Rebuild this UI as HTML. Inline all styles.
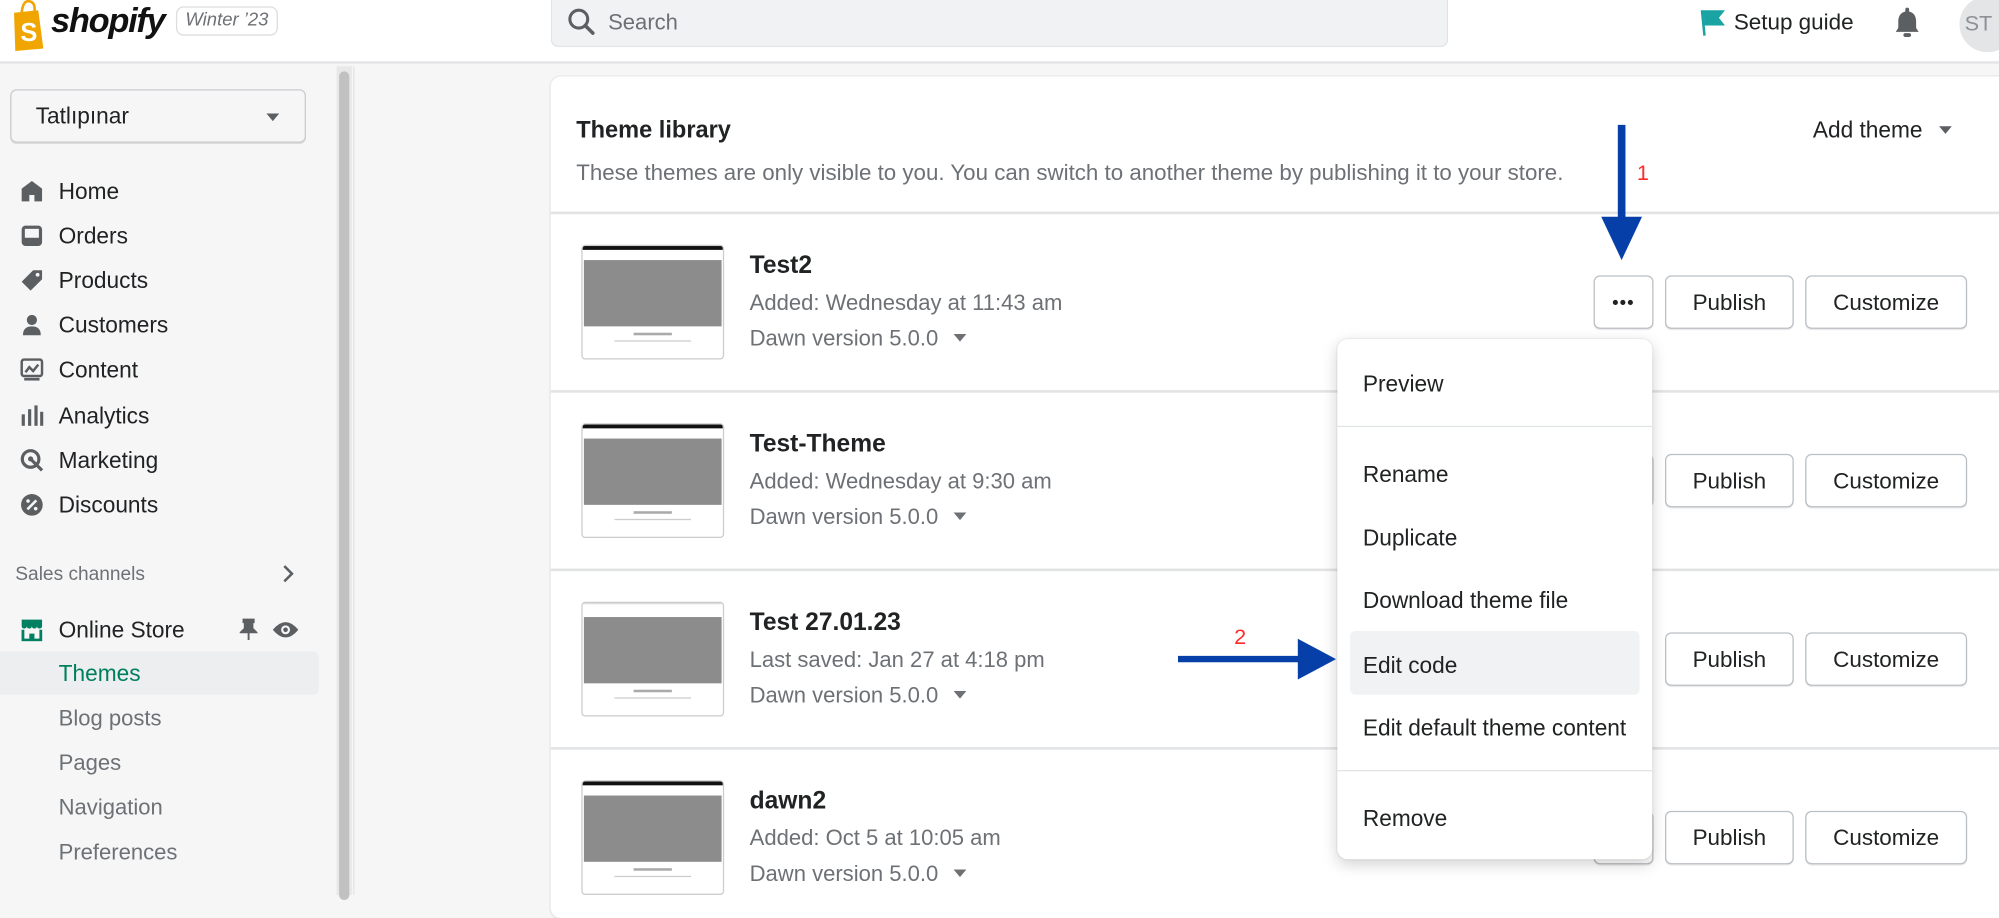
<!DOCTYPE html>
<html><head><meta charset="utf-8"><style>
*{box-sizing:border-box;margin:0;padding:0}
html,body{width:1999px;height:892px;overflow:hidden;background:#f6f6f7}
#w{position:absolute;left:0;top:0;width:1568px;height:700px;transform:scale(1.27487);transform-origin:0 0;font-family:"Liberation Sans",sans-serif;color:#202223;background:#f6f6f7}
.a{position:absolute;white-space:nowrap}
.nav{position:absolute;left:46px;font-size:17.8px;font-weight:500;color:#202223}
.sub{position:absolute;left:46px;font-size:17.3px;color:#6d7175}
.ic{position:absolute;left:16px;width:18px;height:18px}
.btn{position:absolute;height:42px;border:1px solid #babfc3;border-radius:5px;background:#fff;font-size:17.6px;display:flex;align-items:center;justify-content:center;box-shadow:0 1px 0 rgba(0,0,0,.08)}
.t{position:absolute;left:588px;font-size:19.3px;font-weight:bold}
.s{position:absolute;left:588px;font-size:17.3px;color:#6d7175}
.hr{position:absolute;left:432px;width:1136px;height:1px;background:#e1e3e5}
.mi{position:absolute;left:1069px;font-size:17.8px;color:#202223}
.thumb{position:absolute;left:456px;width:112px;height:90px;border:1px solid #ccc;border-radius:3px;background:#fff;overflow:hidden}
.thumb .b{position:absolute;left:0;top:0;width:100%;height:3px;background:#111}
.thumb .g{position:absolute;left:1px;top:11px;width:108px;height:52px;background:#8c8c8c}
.thumb .l{position:absolute;left:40px;top:68px;width:30px;height:2px;background:#aaa}
.thumb .l2{position:absolute;left:25px;top:74px;width:60px;height:1px;background:#ccc}
</style></head><body><div id="w">
<div class="a" style="left:0;top:0;width:1568px;height:50px;background:#fff;border-bottom:2px solid #e4e5e7"></div>
<svg class="a" style="left:8px;top:0" width="28" height="40" viewBox="0 0 28 40"><path d="M3 10 L22 8 L26 38 L4 40 Z" fill="#f0a500"/><path d="M9 10 Q10 0 15 1 Q20 2 19 9" fill="none" stroke="#f0a500" stroke-width="2"/><text x="8" y="32" font-family="Liberation Sans" font-weight="bold" font-size="20" fill="#fff">S</text></svg>
<div class="a" style="left:40px;top:1px;font-size:27px;font-weight:bold;font-style:italic;letter-spacing:-1px;color:#111">shopify</div>
<div class="a" style="left:138px;top:5px;width:80px;height:23px;border:1px solid #ddd;border-radius:6px;font-size:14.5px;font-style:italic;color:#6d7175;text-align:center;line-height:21px">Winter ’23</div>
<div class="a" style="left:432px;top:0;width:704px;height:37px;background:#f1f2f3;border:1px solid #e1e3e5;border-top:none;border-radius:0 0 6px 6px"></div>
<svg class="a" style="left:444px;top:5px" width="24" height="24" viewBox="0 0 24 24"><circle cx="10" cy="10" r="7" fill="none" stroke="#5c5f62" stroke-width="2.4"/><path d="M15 15l6 6" stroke="#5c5f62" stroke-width="2.8" stroke-linecap="round"/></svg>
<div class="a" style="left:477px;top:7px;font-size:17.3px;color:#6d7175">Search</div>
<svg class="a" style="left:1333px;top:6px" width="20" height="22" viewBox="0 0 20 22"><path d="M2 2 L4 22 M3 3 H18 L14 8 L18 13 H4" fill="#1aa3a3" stroke="#1aa3a3" stroke-width="2"/></svg>
<div class="a" style="left:1360px;top:7px;font-size:17.6px;color:#202223">Setup guide</div>
<svg class="a" style="left:1485px;top:4px" width="22" height="26" viewBox="0 0 22 26"><path d="M11 2a1.5 1.5 0 0 1 1.5 1.5V5c4 1 5.5 4 5.5 8v5l2 3H2l2-3v-5c0-4 1.5-7 5.5-8V3.5A1.5 1.5 0 0 1 11 2z" fill="#5c5f62"/><rect x="8" y="22" width="6" height="3" rx="1.5" fill="#5c5f62"/></svg>
<div class="a" style="left:1537px;top:-3px;width:44px;height:44px;border-radius:50%;background:#e4e5e7;font-size:17px;color:#8c9196;line-height:44px;padding-left:4px">ST</div>
<div class="a" style="left:264px;top:52px;width:12px;height:650px;background:#e8e8e8"></div>
<div class="a" style="left:266px;top:56px;width:8px;height:650px;border-radius:4px;background:#c1c1c1"></div>
<div class="a" style="left:277px;top:52px;width:1px;height:650px;background:#e1e3e5"></div>
<div class="a" style="left:8px;top:70px;width:232px;height:42px;border:1px solid #c9cccf;border-radius:5px;background:#f6f6f7;box-shadow:0 1px 0 rgba(0,0,0,.1)"></div>
<div class="a" style="left:28px;top:81px;font-size:17.8px;font-weight:500">Tatlıpınar</div>
<div class="a" style="left:209px;top:89px;border-left:5px solid transparent;border-right:5px solid transparent;border-top:6px solid #5c5f62"></div>

<svg class="ic" style="top:141px" viewBox="0 0 18 18"><path d="M9 1 L17 7 V17 H11 V12 H7 V17 H1 V7 Z" fill="#5c5f62"/></svg>
<div class="nav" style="top:140px">Home</div>
<svg class="ic" style="top:176px" viewBox="0 0 18 18"><rect x="1" y="1" width="16" height="16" rx="3" fill="#5c5f62"/><rect x="3.5" y="3.5" width="11" height="7" fill="#f6f6f7"/></svg>
<div class="nav" style="top:175px">Orders</div>
<svg class="ic" style="top:211px" viewBox="0 0 18 18"><path d="M10 1 H17 V8 L8 17 L1 10 Z" fill="#5c5f62"/><circle cx="13.5" cy="4.5" r="1.5" fill="#f6f6f7"/></svg>
<div class="nav" style="top:210px">Products</div>
<svg class="ic" style="top:246px" viewBox="0 0 18 18"><circle cx="9" cy="5" r="4" fill="#5c5f62"/><path d="M2 17 Q2 10 9 10 Q16 10 16 17Z" fill="#5c5f62"/></svg>
<div class="nav" style="top:245px">Customers</div>
<svg class="ic" style="top:281px" viewBox="0 0 18 18"><rect x="1" y="1" width="16" height="13" rx="2" fill="none" stroke="#5c5f62" stroke-width="2"/><path d="M4 11 L7 7 L10 10 L14 5" stroke="#5c5f62" stroke-width="2" fill="none"/><rect x="3" y="15.5" width="12" height="2" fill="#5c5f62"/></svg>
<div class="nav" style="top:280px">Content</div>
<svg class="ic" style="top:317px" viewBox="0 0 18 18"><rect x="1" y="8" width="2.5" height="9" fill="#5c5f62"/><rect x="6" y="4" width="2.5" height="13" fill="#5c5f62"/><rect x="11" y="1" width="2.5" height="16" fill="#5c5f62"/><rect x="15.5" y="6" width="2.5" height="11" fill="#5c5f62"/></svg>
<div class="nav" style="top:316px">Analytics</div>
<svg class="ic" style="top:352px" viewBox="0 0 18 18"><circle cx="8" cy="8" r="6.5" fill="none" stroke="#5c5f62" stroke-width="2.5"/><circle cx="8" cy="8" r="2" fill="#5c5f62"/><path d="M9 9 L17 17" stroke="#5c5f62" stroke-width="2.5"/></svg>
<div class="nav" style="top:351px">Marketing</div>
<svg class="ic" style="top:387px" viewBox="0 0 18 18"><circle cx="9" cy="9" r="8.5" fill="#5c5f62"/><path d="M5.5 12.5 L12.5 5.5" stroke="#f6f6f7" stroke-width="2"/><circle cx="6" cy="6" r="1.4" fill="#f6f6f7"/><circle cx="12" cy="12" r="1.4" fill="#f6f6f7"/></svg>
<div class="nav" style="top:386px">Discounts</div>

<div class="a" style="left:12px;top:442px;font-size:15px;color:#6d7175;font-weight:500">Sales channels</div>
<svg class="a" style="left:220px;top:443px" width="12" height="14" viewBox="0 0 12 14"><path d="M3 1 L9 7 L3 13" fill="none" stroke="#5c5f62" stroke-width="2"/></svg>
<svg class="ic" style="top:485px" viewBox="0 0 18 18"><path d="M1 1 H17 V6 Q17 8 15 8 Q13 8 13 6 Q13 8 11 8 Q9 8 9 6 Q9 8 7 8 Q5 8 5 6 Q5 8 3 8 Q1 8 1 6Z" fill="#008060"/><path d="M2 9 V17 H16 V9" fill="none" stroke="#008060" stroke-width="2.2"/><rect x="7" y="12" width="4" height="5" fill="#008060"/></svg>
<div class="nav" style="top:484px">Online Store</div>
<svg class="a" style="left:188px;top:485px" width="14" height="18" viewBox="0 0 14 18"><path d="M3 1 H11 V3 H10 V8 L13 11 H1 L4 8 V3 H3Z M7 11 V17" fill="#5c5f62" stroke="#5c5f62" stroke-width="1.5"/></svg>
<svg class="a" style="left:213px;top:486px" width="22" height="16" viewBox="0 0 22 16"><path d="M1 8 Q11 -4 21 8 Q11 20 1 8Z" fill="#5c5f62"/><circle cx="11" cy="8" r="3.5" fill="#f6f6f7"/><circle cx="11" cy="8" r="1.8" fill="#5c5f62"/></svg>
<div class="a" style="left:0;top:511px;width:250px;height:34px;background:#edeeef;border-radius:0 4px 4px 0"></div>
<div class="nav" style="top:518px;color:#007f5f">Themes</div>
<div class="sub" style="top:553px">Blog posts</div>
<div class="sub" style="top:588px">Pages</div>
<div class="sub" style="top:623px">Navigation</div>
<div class="sub" style="top:658px">Preferences</div>

<div class="a" style="left:432px;top:60px;width:1150px;height:660px;background:#fff;border-radius:8px;box-shadow:0 0 0 1px #e8e9eb,0 1px 2px rgba(0,0,0,.1)"></div>
<div class="a" style="left:452px;top:91px;font-size:18.5px;font-weight:bold">Theme library</div>
<div class="a" style="left:452px;top:125px;font-size:17.5px;color:#6d7175">These themes are only visible to you. You can switch to another theme by publishing it to your store.</div>
<div class="a" style="left:1422px;top:92px;font-size:17.8px;font-weight:500">Add theme</div>
<div class="a" style="left:1521px;top:99px;border-left:5px solid transparent;border-right:5px solid transparent;border-top:6px solid #5c5f62"></div>
<div class="hr" style="top:166px;height:2px"></div>
<div class="hr" style="top:306px;height:2px"></div>
<div class="hr" style="top:446px;height:2px"></div>
<div class="hr" style="top:586px;height:2px"></div>

<div class="thumb" style="top:192px"><div class="b"></div><div class="g"></div><div class="l"></div><div class="l2"></div></div>
<div class="thumb" style="top:332px"><div class="b"></div><div class="g"></div><div class="l"></div><div class="l2"></div></div>
<div class="thumb" style="top:472px"><div class="b" style="background:#ddd;height:1px"></div><div class="g"></div><div class="l"></div><div class="l2"></div></div>
<div class="thumb" style="top:612px"><div class="b"></div><div class="g"></div><div class="l"></div><div class="l2"></div></div>

<div class="t" style="top:198px">Test2</div>
<div class="s" style="top:227px">Added: Wednesday at 11:43 am</div>
<div class="s" style="top:255px">Dawn version 5.0.0</div>
<div class="t" style="top:338px">Test-Theme</div>
<div class="s" style="top:367px">Added: Wednesday at 9:30 am</div>
<div class="s" style="top:395px">Dawn version 5.0.0</div>
<div class="t" style="top:478px">Test 27.01.23</div>
<div class="s" style="top:507px">Last saved: Jan 27 at 4:18 pm</div>
<div class="s" style="top:535px">Dawn version 5.0.0</div>
<div class="t" style="top:618px">dawn2</div>
<div class="s" style="top:647px">Added: Oct 5 at 10:05 am</div>
<div class="s" style="top:675px">Dawn version 5.0.0</div>
<div class="a" style="left:748px;top:262px;border-left:5px solid transparent;border-right:5px solid transparent;border-top:6px solid #6d7175"></div>
<div class="a" style="left:748px;top:402px;border-left:5px solid transparent;border-right:5px solid transparent;border-top:6px solid #6d7175"></div>
<div class="a" style="left:748px;top:542px;border-left:5px solid transparent;border-right:5px solid transparent;border-top:6px solid #6d7175"></div>
<div class="a" style="left:748px;top:682px;border-left:5px solid transparent;border-right:5px solid transparent;border-top:6px solid #6d7175"></div>

<div class="btn" style="left:1250px;top:216px;width:47px;font-weight:bold;letter-spacing:1px;font-size:14px">•••</div>
<div class="btn" style="left:1306px;top:216px;width:101px">Publish</div>
<div class="btn" style="left:1416px;top:216px;width:127px">Customize</div>
<div class="btn" style="left:1250px;top:356px;width:47px"></div>
<div class="btn" style="left:1306px;top:356px;width:101px">Publish</div>
<div class="btn" style="left:1416px;top:356px;width:127px">Customize</div>
<div class="btn" style="left:1306px;top:496px;width:101px">Publish</div>
<div class="btn" style="left:1416px;top:496px;width:127px">Customize</div>
<div class="btn" style="left:1250px;top:636px;width:47px"></div>
<div class="btn" style="left:1306px;top:636px;width:101px">Publish</div>
<div class="btn" style="left:1416px;top:636px;width:127px">Customize</div>

<div class="a" style="left:1049px;top:266px;width:247px;height:408px;background:#fff;border-radius:8px;box-shadow:0 0 0 1px rgba(0,0,0,.04),0 4px 12px rgba(0,0,0,.18)"></div>
<div class="a" style="left:1049px;top:334px;width:247px;height:1px;background:#e1e3e5"></div>
<div class="a" style="left:1049px;top:604px;width:247px;height:1px;background:#e1e3e5"></div>
<div class="a" style="left:1059px;top:495px;width:227px;height:50px;background:#f1f2f3;border-radius:4px"></div>
<div class="mi" style="top:291px">Preview</div>
<div class="mi" style="top:362px">Rename</div>
<div class="mi" style="top:412px">Duplicate</div>
<div class="mi" style="top:461px">Download theme file</div>
<div class="mi" style="top:512px">Edit code</div>
<div class="mi" style="top:561px">Edit default theme content</div>
<div class="mi" style="top:632px">Remove</div>

<svg class="a" style="left:0;top:0" width="1568" height="700"><path d="M1272 98 V172" stroke="#063fa8" stroke-width="6"/><path d="M1256 170 H1288 L1272 204Z" fill="#063fa8"/><path d="M924 517 H1020" stroke="#063fa8" stroke-width="5"/><path d="M1018 501 L1048 517 L1018 533Z" fill="#063fa8"/></svg>
<div class="a" style="left:1284px;top:126px;font-size:17px;color:#ff2a2a">1</div>
<div class="a" style="left:968px;top:490px;font-size:17px;color:#ff2a2a">2</div>
</div></body></html>
